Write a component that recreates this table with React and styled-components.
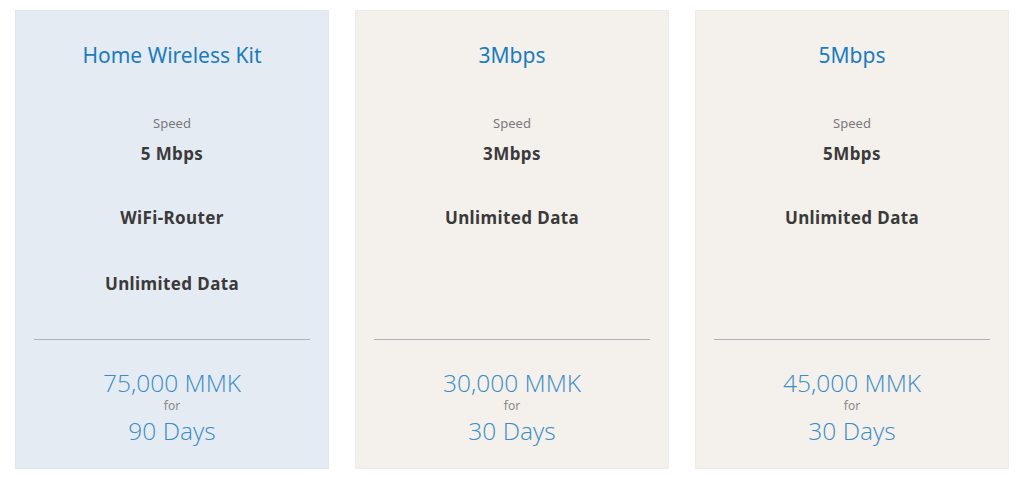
import React from "react";
import styled, { createGlobalStyle } from "styled-components";

const Global = createGlobalStyle`
  html, body { margin: 0; padding: 0; background: #ffffff; }
  body { font-family: "Open Sans", "Noto Sans", sans-serif; }
`;

const Row = styled.div`
  display: flex;
  gap: 26px;
  padding: 10px 0 0 15px;
`;

const Card = styled.div`
  width: 314px;
  height: 459px;
  box-sizing: border-box;
  background: ${(p) => (p.$featured ? "#e5ebf2" : "#f4f0ec")};
  border: 1px solid ${(p) => (p.$featured ? "#e1e7ee" : "#efebe6")};
  display: flex;
  flex-direction: column;
  align-items: stretch;
  text-align: center;
`;

const Title = styled.div`
  margin-top: 30px;
  font-family: "Noto Sans", sans-serif;
  font-size: 21px;
  line-height: 28px;
  color: #1b7cbf;
`;

const Specs = styled.div`
  flex: 1;
  display: flex;
  flex-direction: column;
`;

const Label = styled.div`
  margin-top: 45px;
  font-family: "Noto Sans", sans-serif;
  font-size: 13px;
  line-height: 18px;
  color: #7a7a7a;
`;

const Value = styled.div`
  margin-top: ${(p) => p.$gap}px;
  font-family: "Noto Sans", sans-serif;
  font-weight: 700;
  font-size: 17px;
  letter-spacing: 0.4px;
  line-height: 24px;
  color: #3a3a3a;
`;

const Divider = styled.hr`
  margin: 0 18px;
  border: none;
  border-top: 1px solid #aeb2b6;
  height: 0;
`;

const Price = styled.div`
  margin-top: 29px;
  font-family: "Open Sans", sans-serif;
  font-weight: 300;
  font-size: 24.5px;
  line-height: 28px;
  color: #3b8dc4;
`;

const For = styled.div`
  margin-top: 2px;
  font-family: "Noto Sans", sans-serif;
  font-size: 12px;
  line-height: 14px;
  color: #8a8a8a;
`;

const Days = styled(Price)`
  margin-top: 4px;
  margin-bottom: 23px;
`;

const plans = [
  {
    title: "Home Wireless Kit",
    speed: "5 Mbps",
    features: ["WiFi-Router", "Unlimited Data"],
    price: "75,000 MMK",
    days: "90 Days",
    featured: true,
  },
  {
    title: "3Mbps",
    speed: "3Mbps",
    features: ["Unlimited Data"],
    price: "30,000 MMK",
    days: "30 Days",
  },
  {
    title: "5Mbps",
    speed: "5Mbps",
    features: ["Unlimited Data"],
    price: "45,000 MMK",
    days: "30 Days",
  },
];

export default function App() {
  return (
    <>
      <Global />
      <Row>
        {plans.map((p) => (
          <Card key={p.title} $featured={p.featured}>
            <Title>{p.title}</Title>
            <Specs>
              <Label>Speed</Label>
              <Value $gap={10}>{p.speed}</Value>
              {p.features.map((f, i) => (
                <Value key={f} $gap={i === 0 ? 40 : 42}>
                  {f}
                </Value>
              ))}
            </Specs>
            <Divider />
            <Price>{p.price}</Price>
            <For>for</For>
            <Days>{p.days}</Days>
          </Card>
        ))}
      </Row>
    </>
  );
}
